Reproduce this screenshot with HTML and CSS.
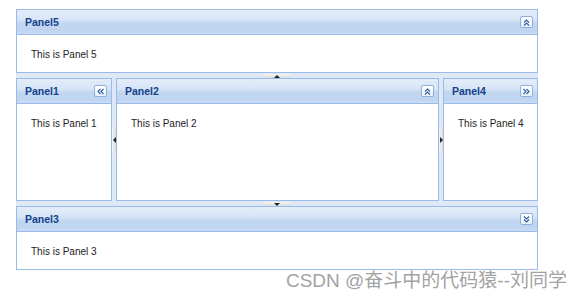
FILE: index.html
```html
<!DOCTYPE html>
<html>
<head>
<meta charset="utf-8">
<link rel="stylesheet" href="styles.css">
</head>
<body>
<div class="layout">
  <div class="panel north">
    <div class="panel-header">
      <span class="panel-title">Panel5</span>
      <span class="tool"><svg width="7" height="7" viewBox="0 0 7 7"><polyline points="1,3.5 3.5,1 6,3.5"/><polyline points="1,6.5 3.5,4 6,6.5"/></svg></span>
    </div>
    <div class="panel-body">This is Panel 5</div>
  </div>
  <div class="split-h"><span class="handle-h"><span class="tri tri-up"></span></span></div>
  <div class="middle">
    <div class="panel west">
      <div class="panel-header">
        <span class="panel-title">Panel1</span>
        <span class="tool"><svg width="7" height="7" viewBox="0 0 7 7"><polyline points="3.5,1 1,3.5 3.5,6"/><polyline points="6.5,1 4,3.5 6.5,6"/></svg></span>
      </div>
      <div class="panel-body">This is Panel 1</div>
    </div>
    <div class="split-v"><span class="handle-v"><span class="tri tri-left"></span></span></div>
    <div class="panel center">
      <div class="panel-header">
        <span class="panel-title">Panel2</span>
        <span class="tool"><svg width="7" height="7" viewBox="0 0 7 7"><polyline points="1,3.5 3.5,1 6,3.5"/><polyline points="1,6.5 3.5,4 6,6.5"/></svg></span>
      </div>
      <div class="panel-body">This is Panel 2</div>
    </div>
    <div class="split-v"><span class="handle-v"><span class="tri tri-right"></span></span></div>
    <div class="panel east">
      <div class="panel-header">
        <span class="panel-title">Panel4</span>
        <span class="tool"><svg width="7" height="7" viewBox="0 0 7 7"><polyline points="0.5,1 3,3.5 0.5,6"/><polyline points="3.5,1 6,3.5 3.5,6"/></svg></span>
      </div>
      <div class="panel-body">This is Panel 4</div>
    </div>
  </div>
  <div class="split-h"><span class="handle-h"><span class="tri tri-down"></span></span></div>
  <div class="panel south">
    <div class="panel-header">
      <span class="panel-title">Panel3</span>
      <span class="tool"><svg width="7" height="7" viewBox="0 0 7 7"><polyline points="1,0.5 3.5,3 6,0.5"/><polyline points="1,3.5 3.5,6 6,3.5"/></svg></span>
    </div>
    <div class="panel-body">This is Panel 3</div>
  </div>
</div>
<div class="watermark">CSDN @奋斗中的代码猿--刘同学</div>
</body>
</html>
```
FILE: styles.css
```css
html, body {
  margin: 0;
  padding: 0;
  background: #ffffff;
}
body {
  position: relative;
  width: 582px;
  height: 299px;
  overflow: hidden;
  font-family: "Liberation Sans", Arial, sans-serif;
}
.layout {
  margin: 9px 0 0 16px;
  width: 522px;
  display: flex;
  flex-direction: column;
}
.panel {
  box-sizing: border-box;
  border: 1px solid #99bbe8;
  display: flex;
  flex-direction: column;
  background: #ffffff;
  min-width: 0;
}
.north, .south { height: 64px; }
.middle {
  display: flex;
  height: 123px;
}
.west { width: 96px; flex: none; }
.center { flex: 1; }
.east { width: 95px; flex: none; }
.panel-header {
  height: 24px;
  flex: none;
  border-bottom: 1px solid #99bbe8;
  display: flex;
  align-items: center;
  justify-content: space-between;
  padding: 0 4px 0 8px;
  background: linear-gradient(to bottom, #e4edf9 0%, #d8e5f7 40%, #c3d7f1 55%, #bfd4f0 85%, #cadcf4 100%);
}
.panel-title {
  font-weight: bold;
  font-size: 10.5px;
  color: #15428b;
}
.tool {
  box-sizing: border-box;
  width: 13px;
  height: 12px;
  border: 1px solid #8fb0dc;
  border-radius: 2px;
  background: linear-gradient(to bottom, #ffffff 0%, #e8f0fb 100%);
  display: flex;
  align-items: center;
  justify-content: center;
}
.tool svg polyline {
  fill: none;
  stroke: #2d5c9e;
  stroke-width: 1.1;
}
.panel-body {
  flex: 1;
  padding: 13px 14px 11px;
  font-size: 10px;
  line-height: 14px;
  color: #222222;
  white-space: nowrap;
  overflow: hidden;
}
.split-h {
  height: 5px;
  background: #dfe8f6;
  display: flex;
  justify-content: center;
  align-items: flex-end;
}
.handle-h {
  width: 30px;
  height: 4px;
  background: linear-gradient(to bottom, #f4f4f4, #dcdcdc);
  border-radius: 3px 3px 0 0;
  display: flex;
  justify-content: center;
  align-items: center;
}
.split-v {
  width: 4px;
  flex: none;
  background: #dfe8f6;
  display: flex;
  align-items: center;
  justify-content: center;
}
.handle-v {
  width: 4px;
  height: 26px;
  background: linear-gradient(to right, #f4f4f4, #dcdcdc);
  display: flex;
  justify-content: center;
  align-items: center;
}
.tri {
  width: 0;
  height: 0;
  border-style: solid;
}
.tri-up {
  border-width: 0 3px 3px 3px;
  border-color: transparent transparent #222 transparent;
}
.tri-down {
  border-width: 3px 3px 0 3px;
  border-color: #222 transparent transparent transparent;
}
.tri-left {
  border-width: 3px 3px 3px 0;
  border-color: transparent #222 transparent transparent;
}
.tri-right {
  border-width: 3px 0 3px 3px;
  border-color: transparent transparent transparent #222;
}
.watermark {
  position: absolute;
  right: 15px;
  top: 269px;
  font-family: "Liberation Sans", "Noto Sans CJK SC", sans-serif;
  font-size: 19px;
  line-height: 24px;
  color: #a3a3a3;
  text-shadow: 0 0 2px #ffffff;
  white-space: nowrap;
}
```
